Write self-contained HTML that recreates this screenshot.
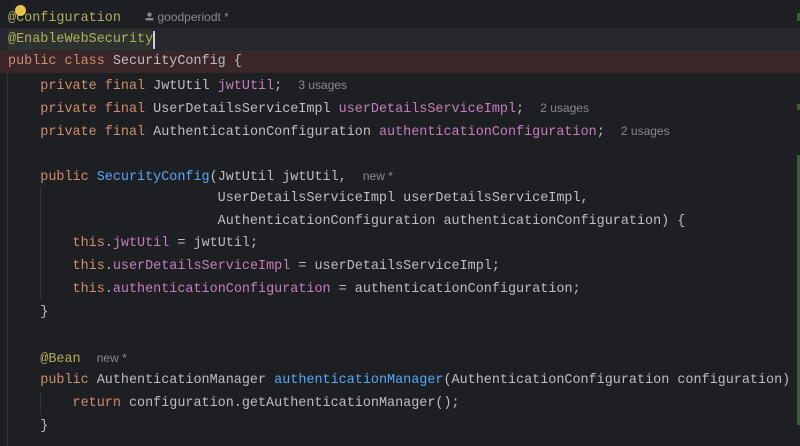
<!DOCTYPE html>
<html><head><meta charset="utf-8"><style>
html,body{margin:0;padding:0;width:800px;height:446px;overflow:hidden;background:#1e1f22;}
.l{position:absolute;left:0;width:800px;height:22.7px;line-height:22.7px;white-space:pre;font-family:"Liberation Mono",monospace;font-size:13.45px;color:#bcbec4;}
.c{position:absolute;left:8px;top:0;}
.k{color:#cf8e6d}.a{color:#b3ae60}.f{color:#c77dbb}.m{color:#56a8f5}
.h{font-family:"Liberation Sans",sans-serif;font-size:12px;color:#868a91;}
.g{position:absolute;width:1px;background:#313338;}
</style></head><body>
<div class="g" style="left:7px;top:73px;height:373px"></div>
<div class="g" style="left:40px;top:187px;height:113px"></div>
<div class="g" style="left:40px;top:392px;height:22px"></div>
<div style="position:absolute;left:0;top:28px;width:800px;height:23px;background:#26282e"></div>
<div style="position:absolute;left:0;top:51px;width:800px;height:22px;background:#3a2529"></div>
<div style="position:absolute;left:8px;top:29px;width:144px;height:21px;background:#2f3330"></div>
<div style="position:absolute;left:797px;top:155px;width:3px;height:270px;background:#3d5a3f"></div>
<div style="position:absolute;left:797px;top:13px;width:3px;height:8px;background:#3d5a3f"></div>
<div style="position:absolute;left:797px;top:104px;width:3px;height:6px;background:#3d5a3f"></div>

<div class="l" style="top:6px"><span class="c"><span class="a">@Configuration</span>   <span class="h"><svg width="9" height="9" viewBox="0 0 9 9" style="vertical-align:0"><circle cx="4.5" cy="2.6" r="2.1" fill="#868a91"/><rect x="0.5" y="6" width="8" height="2.5" rx="1" fill="#868a91"/></svg> goodperiodt *</span></span></div>
<div style="position:absolute;left:15px;top:5px;width:11px;height:11px;border-radius:50%;background:#e8c24a"></div>
<div class="l" style="top:28.7px"><span class="c"><span class="a">@EnableWebSecurity</span></span></div>
<div style="position:absolute;left:153px;top:31px;width:2px;height:18px;background:#ced0d6"></div>
<div class="l" style="top:51.4px"><span class="c"><span class="k">public class </span>SecurityConfig {</span></div>
<div class="l" style="top:74.1px"><span class="c">    <span class="k">private final </span>JwtUtil <span class="f">jwtUtil</span>;  <span class="h">3 usages</span></span></div>
<div class="l" style="top:96.8px"><span class="c">    <span class="k">private final </span>UserDetailsServiceImpl <span class="f">userDetailsServiceImpl</span>;  <span class="h">2 usages</span></span></div>
<div class="l" style="top:119.5px"><span class="c">    <span class="k">private final </span>AuthenticationConfiguration <span class="f">authenticationConfiguration</span>;  <span class="h">2 usages</span></span></div>
<div class="l" style="top:165px"><span class="c">    <span class="k">public </span><span class="m">SecurityConfig</span>(JwtUtil jwtUtil,  <span class="h">new *</span></span></div>
<div class="l" style="top:187.8px"><span class="c">                          UserDetailsServiceImpl userDetailsServiceImpl,</span></div>
<div class="l" style="top:210.6px"><span class="c">                          AuthenticationConfiguration authenticationConfiguration) {</span></div>
<div class="l" style="top:233.4px"><span class="c">        <span class="k">this</span>.<span class="f">jwtUtil</span> = jwtUtil;</span></div>
<div class="l" style="top:256.2px"><span class="c">        <span class="k">this</span>.<span class="f">userDetailsServiceImpl</span> = userDetailsServiceImpl;</span></div>
<div class="l" style="top:279px"><span class="c">        <span class="k">this</span>.<span class="f">authenticationConfiguration</span> = authenticationConfiguration;</span></div>
<div class="l" style="top:301.8px"><span class="c">    }</span></div>
<div class="l" style="top:347.4px"><span class="c">    <span class="a">@Bean</span>  <span class="h">new *</span></span></div>
<div class="l" style="top:370.2px"><span class="c">    <span class="k">public </span>AuthenticationManager <span class="m">authenticationManager</span>(AuthenticationConfiguration configuration)</span></div>
<div class="l" style="top:393px"><span class="c">        <span class="k">return </span>configuration.getAuthenticationManager();</span></div>
<div class="l" style="top:415.8px"><span class="c">    }</span></div>
</body></html>
